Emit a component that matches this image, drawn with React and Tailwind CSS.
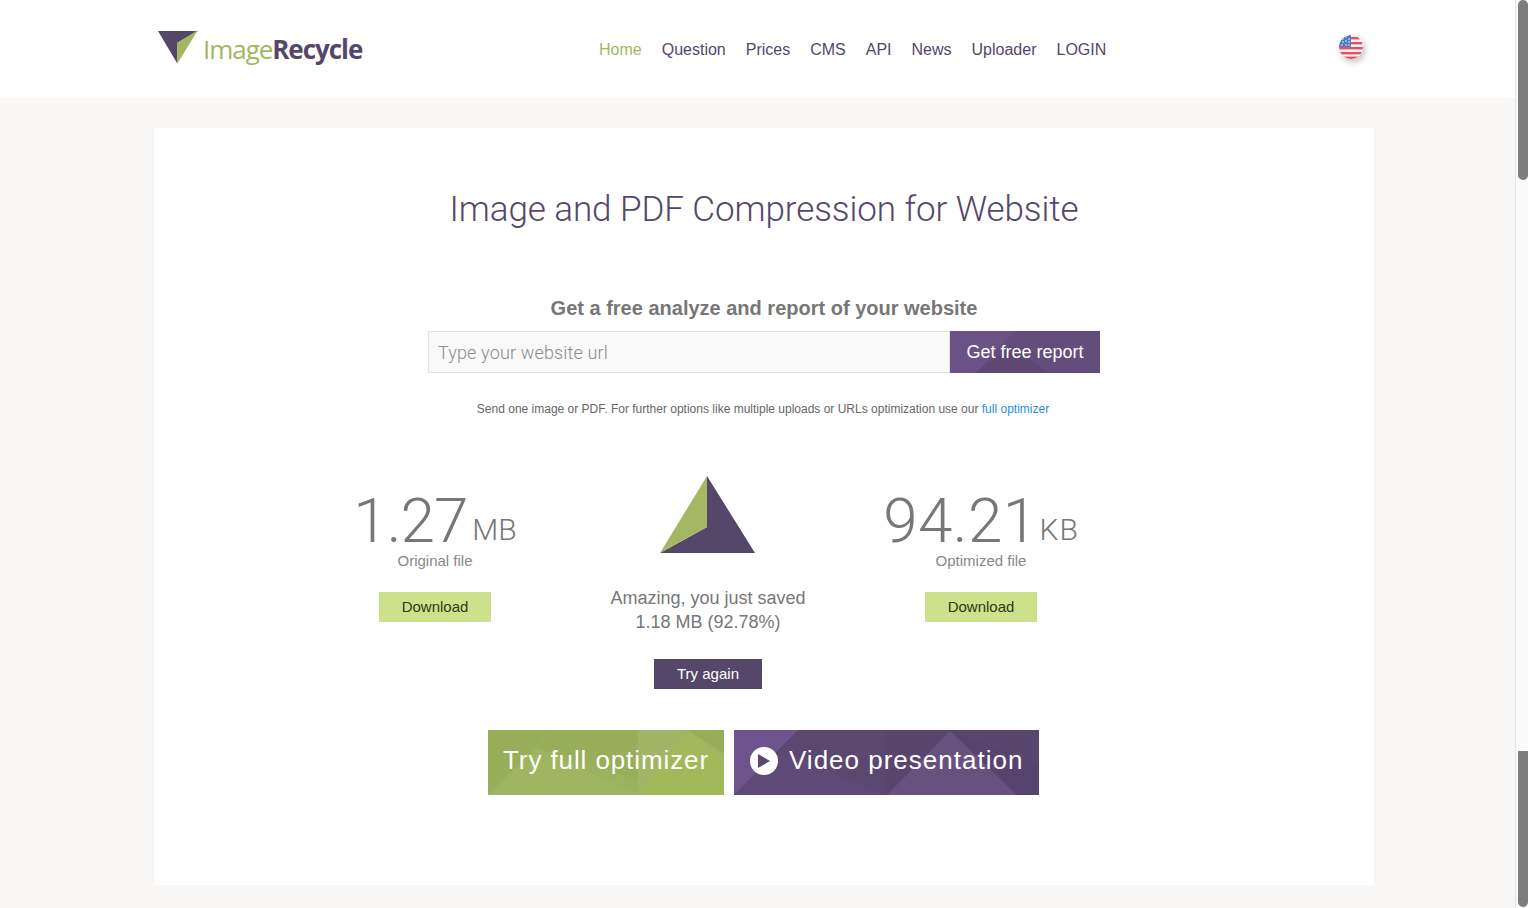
const navItems = ["Home", "Question", "Prices", "CMS", "API", "News", "Uploader", "LOGIN"];

function Logo() {
  return (
    <div className="flex items-center">
      <svg width="42" height="36" viewBox="0 0 42 36" className="shrink-0">
        <polygon points="0,1 40,1 19,13 19,33" fill="#54476a" />
        <polygon points="40,0 19,13 19,34" fill="#a2b75f" />
      </svg>
      <span className="ml-[3px] mt-[1px] font-['Open_Sans',sans-serif] text-[26px] leading-none tracking-[-1.05px] whitespace-nowrap">
        <span className="font-normal text-[#a2b75f]">Image</span>
        <span className="font-bold text-[#54476a]">Recycle</span>
      </span>
    </div>
  );
}

function Flag() {
  return (
    <div className="w-6 h-6 rounded-full shadow-[2px_3px_6px_rgba(0,0,0,0.25)]">
      <svg width="24" height="24" viewBox="0 0 24 24" className="block rounded-full">
        <defs>
          <clipPath id="flagClip">
            <circle cx="12" cy="12" r="12" />
          </clipPath>
        </defs>
        <g clipPath="url(#flagClip)">
          <rect width="24" height="24" fill="#f5f3f3" />
          <rect x="0" y="2" width="24" height="2.4" fill="#e8505f" />
          <rect x="0" y="7" width="24" height="2.4" fill="#e8505f" />
          <rect x="0" y="12" width="24" height="2.4" fill="#e8505f" />
          <rect x="0" y="17" width="24" height="2.4" fill="#e8505f" />
          <rect x="0" y="21.6" width="24" height="2.4" fill="#e8505f" />
          <rect x="0" y="0" width="12" height="12" fill="#4f7cc4" />
          {[[4, 4], [7, 2], [10, 4], [4, 7], [7, 6], [10, 7], [3, 10], [7, 10], [10, 10]].map(([x, y], i) => (
            <circle key={i} cx={x} cy={y} r="0.8" fill="#e8eefa" />
          ))}
        </g>
      </svg>
    </div>
  );
}

function Header() {
  return (
    <header className="h-[98px] bg-white mr-[13px]">
      <div className="w-[1220px] ml-[154px] h-full flex items-center relative">
        <div className="w-[445px] pl-[4px] -mt-[2px]">
          <Logo />
        </div>
        <nav className="flex gap-[20px] text-[16px] text-[#54476a] font-['Liberation_Sans',sans-serif] mt-[1px]">
          {navItems.map((item, i) => (
            <a key={item} className={i === 0 ? "text-[#a2b75f]" : ""}>
              {item}
            </a>
          ))}
        </nav>
        <div className="ml-auto mr-[11px] -mt-[4px]">
          <Flag />
        </div>
      </div>
    </header>
  );
}

function Stat({ value, unit, label, valueClass, unitClass }) {
  return (
    <div className="flex flex-col items-center pt-[16px]">
      <div className="flex items-baseline font-['Roboto',sans-serif] font-light text-[#777] leading-none">
        <span className={"text-[62px] leading-[60px] " + valueClass}>{value}</span>
        <span className={"text-[30px] -translate-y-[2px] " + unitClass}>{unit}</span>
      </div>
      <div className="text-[15px] leading-[20px] text-[#888]">{label}</div>
      <button className="mt-[21px] w-[112px] h-[30px] bg-[#cde18d] text-[#2e3a10] text-[15px]">
        Download
      </button>
    </div>
  );
}

function Pyramid() {
  return (
    <svg width="96" height="80" viewBox="0 0 96 80" className="block">
      <polygon points="47,1 95,78 0,78 47,52" fill="#54476a" />
      <polygon points="47,1 47,52 0,78" fill="#a6b763" />
    </svg>
  );
}

function GreenButton() {
  return (
    <a className="relative block w-[236px] h-[65px] bg-[#9cb35d] overflow-hidden">
      <svg width="236" height="65" viewBox="0 0 236 65" className="absolute inset-0">
        <polygon points="0,0 64,0 0,64" fill="#98ae58" />
        <polygon points="0,65 50,18 150,65" fill="#9fb562" />
        <polygon points="150,0 236,0 236,65 150,65" fill="#a0b565" />
        <polygon points="150,65 200,0 236,30 236,65" fill="#a2b95b" />
        <polygon points="64,0 150,0 150,50 50,18" fill="#98ae58" />
        <polygon points="200,0 236,0 236,24" fill="#97ad58" />
      </svg>
      <span className="relative block text-center pt-[12px] text-white text-[26px] leading-[36px] tracking-[0.9px] font-['Liberation_Sans',sans-serif]">
        Try full optimizer
      </span>
    </a>
  );
}

function VideoButton() {
  return (
    <a className="relative flex items-center w-[305px] h-[65px] pb-[5px] bg-[#5b4871] overflow-hidden">
      <svg width="305" height="65" viewBox="0 0 305 65" className="absolute inset-0">
        <polygon points="0,0 64,0 0,65" fill="#6d548d" />
        <polygon points="0,65 48,20 150,65" fill="#5e4a77" />
        <polygon points="151,0 305,0 305,65 151,65" fill="#59466f" />
        <polygon points="153,65 216,1 283,65" fill="#67517f" />
        <polygon points="216,0 305,35 305,65 283,65" fill="#56446e" />
      </svg>
      <span className="relative ml-[16px] mt-[1px] w-[28px] h-[28px] rounded-full bg-white flex items-center justify-center shrink-0">
        <svg width="14" height="16" viewBox="0 0 14 16">
          <polygon points="1,1 13,8 1,15" fill="#5b4871" />
        </svg>
      </span>
      <span className="relative ml-[11px] text-white text-[26px] leading-[36px] tracking-[1px] font-['Liberation_Sans',sans-serif] whitespace-nowrap">
        Video presentation
      </span>
    </a>
  );
}

function Scrollbars() {
  return (
    <div className="absolute top-0 right-0 w-[13px] h-[908px] bg-[#fafafa] border-l border-[#e4e4e4]">
      <div className="absolute top-0 left-[2px] w-[10px] h-[180px] rounded-[5px] bg-[#7d7d7d]" />
      <div className="absolute top-[751px] left-[2px] w-[10px] h-[156px] rounded-b-[5px] bg-[#7d7d7d]" />
    </div>
  );
}

export default function App() {
  return (
    <div className="relative w-[1528px] h-[908px] overflow-hidden bg-[#f8f7f5] font-['Liberation_Sans',sans-serif]">
      <Header />
      <main className="mt-[30px] ml-[154px] w-[1220px] h-[757px] bg-white flex flex-col items-center">
        <h1 className="mt-[59px] text-[35px] leading-[46px] tracking-[-0.08px] font-['Roboto',sans-serif] font-light text-[#54476a]">
          Image and PDF Compression for Website
        </h1>
        <h2 className="mt-[62px] text-[20px] leading-[26px] font-bold text-[#777]">
          Get a free analyze and report of your website
        </h2>
        <form className="mt-[10px] flex w-[672px] h-[42px]">
          <input
            readOnly
            placeholder="Type your website url"
            className="flex-1 min-w-0 px-[9px] bg-[#f9f9f9] border border-[#e2e2e2] text-[18px] tracking-[0.15px] font-['Roboto',sans-serif] font-light placeholder:text-[#8b8b8b] outline-none"
          />
          <button type="button" className="relative w-[150px] bg-[#6a5287] text-white text-[18px] overflow-hidden">
            <svg width="150" height="42" viewBox="0 0 150 42" className="absolute inset-0">
              <polygon points="25,42 64,0 150,0 150,42" fill="#634d7d" />
              <polygon points="25,42 60,14 100,42" fill="#5c4873" />
            </svg>
            <span className="relative">Get free report</span>
          </button>
        </form>
        <p className="mt-[28px] mr-[2px] text-[12px] leading-[16px] text-[#666]">
          Send one image or PDF. For further options like multiple uploads or URLs optimization use our{" "}
          <a className="text-[#1e8fe1]">full optimizer</a>
        </p>

        <section className="mt-[58px] self-start ml-[144.5px] grid grid-cols-[273px_273px_273px]">
          <Stat value="1.27" unit="MB" label="Original file" valueClass="tracking-[-1px]" unitClass="ml-[5px]" />
          <div className="flex flex-col items-center">
            <Pyramid />
            <p className="mt-[31px] text-[18px] leading-[24px] text-[#777] text-center">
              Amazing, you just saved
              <br />
              1.18 MB (92.78%)
            </p>
            <button className="mt-[25px] w-[108px] h-[30px] bg-[#54476a] text-white text-[15px]">Try again</button>
          </div>
          <Stat value="94.21" unit="KB" label="Optimized file" valueClass="tracking-[0.4px]" unitClass="ml-[2px] tracking-[1px]" />
        </section>

        <div className="mt-[41px] mr-[1px] flex gap-[10px]">
          <GreenButton />
          <VideoButton />
        </div>
      </main>
      <Scrollbars />
    </div>
  );
}
